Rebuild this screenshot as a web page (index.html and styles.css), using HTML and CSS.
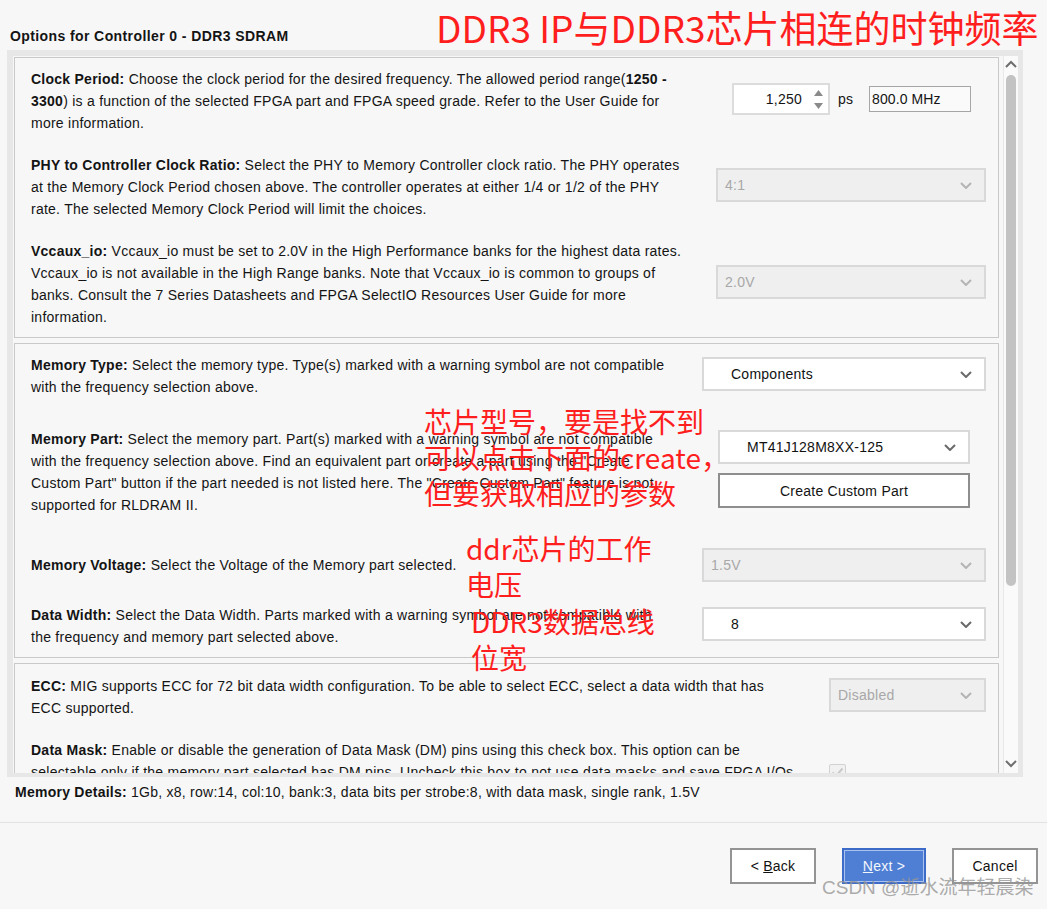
FILE: index.html
```html
<!DOCTYPE html>
<html>
<head>
<meta charset="utf-8">
<link rel="stylesheet" href="styles.css">
</head>
<body>
<div class="page">
  <div class="title">Options for Controller 0 - DDR3 SDRAM</div>
  <div class="pane">
    <div class="viewport">
      <div class="panels">
        <div class="panel p1">
          <div class="row">
            <div class="text"><b>Clock Period:</b> Choose the clock period for the desired frequency. The allowed period range(<b>1250 -</b><br><b>3300</b>) is a function of the selected FPGA part and FPGA speed grade. Refer to the User Guide for<br>more information.</div>
            <div class="ctrl clock">
              <div class="spin">
                <span class="spin-val">1,250</span>
                <span class="spin-arrows">
                  <svg width="9" height="6" viewBox="0 0 9 6"><path d="M0 6L4.5 0L9 6Z" fill="#8a8a8a"/></svg>
                  <svg width="9" height="6" viewBox="0 0 9 6"><path d="M0 0L4.5 6L9 0Z" fill="#8a8a8a"/></svg>
                </span>
              </div>
              <span class="unit">ps</span>
              <div class="freq">800.0 MHz</div>
            </div>
          </div>
          <div class="row gap20">
            <div class="text"><b>PHY to Controller Clock Ratio:</b> Select the PHY to Memory Controller clock ratio. The PHY operates<br>at the Memory Clock Period chosen above. The controller operates at either 1/4 or 1/2 of the PHY<br>rate. The selected Memory Clock Period will limit the choices.</div>
            <div class="ctrl dd dd-off w270"><span>4:1</span><svg class="chev" width="12" height="7" viewBox="0 0 12 7"><path d="M1 1l5 5 5-5" fill="none" stroke="currentColor" stroke-width="2"/></svg></div>
          </div>
          <div class="row gap20">
            <div class="text"><b>Vccaux_io:</b> Vccaux_io must be set to 2.0V in the High Performance banks for the highest data rates.<br>Vccaux_io is not available in the High Range banks. Note that Vccaux_io is common to groups of<br>banks. Consult the 7 Series Datasheets and FPGA SelectIO Resources User Guide for more<br>information.</div>
            <div class="ctrl dd dd-off w270"><span>2.0V</span><svg class="chev" width="12" height="7" viewBox="0 0 12 7"><path d="M1 1l5 5 5-5" fill="none" stroke="currentColor" stroke-width="2"/></svg></div>
          </div>
        </div>

        <div class="panel p2">
          <div class="row">
            <div class="text"><b>Memory Type:</b> Select the memory type. Type(s) marked with a warning symbol are not compatible<br>with the frequency selection above.</div>
            <div class="ctrl dd dd-on w284"><span>Components</span><svg class="chev" width="12" height="7" viewBox="0 0 12 7"><path d="M1 1l5 5 5-5" fill="none" stroke="currentColor" stroke-width="2"/></svg></div>
          </div>
          <div class="row gap30">
            <div class="text"><b>Memory Part:</b> Select the memory part. Part(s) marked with a warning symbol are not compatible<br>with the frequency selection above. Find an equivalent part or create a part using the "Create<br>Custom Part" button if the part needed is not listed here. The "Create Custom Part" feature is not<br>supported for RLDRAM II.</div>
            <div class="ctrl part">
              <div class="dd dd-on"><span>MT41J128M8XX-125</span><svg class="chev" width="12" height="7" viewBox="0 0 12 7"><path d="M1 1l5 5 5-5" fill="none" stroke="currentColor" stroke-width="2"/></svg></div>
              <div class="btn-custom">Create Custom Part</div>
            </div>
          </div>
          <div class="row gap32">
            <div class="text"><b>Memory Voltage:</b> Select the Voltage of the Memory part selected.</div>
            <div class="ctrl flat dd dd-off w284"><span>1.5V</span><svg class="chev" width="12" height="7" viewBox="0 0 12 7"><path d="M1 1l5 5 5-5" fill="none" stroke="currentColor" stroke-width="2"/></svg></div>
          </div>
          <div class="row gap22">
            <div class="text"><b>Data Width:</b> Select the Data Width. Parts marked with a warning symbol are not compatible with<br>the frequency and memory part selected above.</div>
            <div class="ctrl dd dd-on w284"><span>8</span><svg class="chev" width="12" height="7" viewBox="0 0 12 7"><path d="M1 1l5 5 5-5" fill="none" stroke="currentColor" stroke-width="2"/></svg></div>
          </div>
        </div>

        <div class="panel p3">
          <div class="row">
            <div class="text"><b>ECC:</b> MIG supports ECC for 72 bit data width configuration. To be able to select ECC, select a data width that has<br>ECC supported.</div>
            <div class="ctrl dd dd-off w157"><span>Disabled</span><svg class="chev" width="12" height="7" viewBox="0 0 12 7"><path d="M1 1l5 5 5-5" fill="none" stroke="currentColor" stroke-width="2"/></svg></div>
          </div>
          <div class="row gap20">
            <div class="text text-tall"><b>Data Mask:</b> Enable or disable the generation of Data Mask (DM) pins using this check box. This option can be<br>selectable only if the memory part selected has DM pins. Uncheck this box to not use data masks and save FPGA I/Os.</div>
            <div class="ctrl flat w157">
              <div class="check"><svg width="13" height="11" viewBox="0 0 13 11"><path d="M1.5 5.5l3.5 3.5 6.5-7.5" fill="none" stroke="#c9c9c9" stroke-width="2"/></svg></div>
            </div>
          </div>
        </div>
      </div>
      <div class="sb">
        <svg class="sb-up" width="12" height="8" viewBox="0 0 12 8"><path d="M1 7L6 2L11 7" fill="none" stroke="#6e6e6e" stroke-width="2"/></svg>
        <div class="thumb"></div>
        <div class="sb-fill"></div>
        <svg class="sb-down" width="12" height="8" viewBox="0 0 12 8"><path d="M1 1L6 6L11 1" fill="none" stroke="#6e6e6e" stroke-width="2"/></svg>
      </div>
    </div>
  </div>

  <div class="details"><b>Memory Details:</b> 1Gb, x8, row:14, col:10, bank:3, data bits per strobe:8, with data mask, single rank, 1.5V</div>
  <div class="sep"></div>
  <div class="buttons">
    <div class="btn"><span>&lt; <u>B</u>ack</span></div>
    <div class="btn btn-primary"><span><u>N</u>ext &gt;</span></div>
    <div class="btn"><span>Cancel</span></div>
  </div>

  <div class="note note-top">DDR3 IP与DDR3芯片相连的时钟频率</div>
  <div class="note note-part">芯片型号，要是找不到<br>可以点击下面的create，<br>但要获取相应的参数</div>
  <div class="note note-volt">ddr芯片的工作<br>电压</div>
  <div class="note note-width">DDR3数据总线<br>位宽</div>
  <div class="watermark">CSDN @逝水流年轻晨染</div>
</div>
</body>
</html>
```

FILE: styles.css
```css
* { box-sizing: border-box; }

body {
  margin: 0;
  background: #f7f7f7;
  font-family: "Liberation Sans", Arial, sans-serif;
  font-size: 14px;
  letter-spacing: 0.25px;
  color: #141414;
}

.page {
  position: relative;
  width: 1047px;
  height: 909px;
  overflow: hidden;
}

.title {
  height: 50px;
  padding: 26px 0 0 10px;
  line-height: 20px;
  font-weight: bold;
  letter-spacing: 0.4px;
}

.pane {
  margin-left: 7px;
  width: 1016px;
  height: 727px;
  background: #e7e7e7;
  padding: 6px 5px 4px 6px;
}

.viewport {
  display: flex;
  height: 717px;
  background: #f7f7f7;
  overflow: hidden;
}

.panels {
  flex: 1 1 auto;
  padding: 1px 4px 0 1px;
  display: flex;
  flex-direction: column;
  gap: 5px;
  overflow: hidden;
}

.panel {
  flex: none;
  border: 1px solid #c9c9c9;
  background: #f7f7f7;
  padding: 10px 12px 9px 16px;
}

.p3 { padding-top: 11px; }

.row {
  display: flex;
  align-items: center;
  justify-content: space-between;
}

.gap20 { margin-top: 20px; }
.gap22 { margin-top: 22px; }
.gap30 { margin-top: 30px; }
.gap32 { margin-top: 32px; }

.text {
  flex: 1 1 auto;
  white-space: nowrap;
  line-height: 22px;
}

.text-tall { padding-bottom: 22px; }

.ctrl {
  flex: none;
  margin-bottom: 4px;
}

.ctrl.flat { margin-bottom: 0; }

.w157 { width: 157px; }
.w270 { width: 270px; }
.w284 { width: 284px; }

/* clock controls */
.clock {
  display: flex;
  align-items: center;
  margin-right: 15px;
}

.spin {
  width: 98px;
  height: 32px;
  background: #fff;
  border: 2px solid #dcdcdc;
  display: flex;
  align-items: center;
  justify-content: flex-end;
  padding-right: 5px;
}

.spin-val { margin-right: 12px; }

.spin-arrows {
  display: flex;
  flex-direction: column;
  gap: 7px;
}

.spin-arrows svg { display: block; }

.unit { margin-left: 8px; width: 31px; }

.freq {
  width: 102px;
  height: 26px;
  border: 1px solid #a6a6a6;
  background: #fafafa;
  line-height: 24px;
  padding-left: 2px;
  letter-spacing: 0.1px;
}

/* dropdowns */
.dd {
  height: 34px;
  border: 2px solid #d9d9d9;
  display: flex;
  align-items: center;
  justify-content: space-between;
  padding: 0 12px 0 27px;
}

.dd-on { background: #fff; color: #111; }
.dd-on .chev { color: #6a6a6a; }

.dd-off {
  background: #efefef;
  color: #a8a8a8;
  padding-left: 7px;
}
.dd-off .chev { color: #b4b4b4; }

.chev { display: block; }

.part {
  width: 252px;
  margin-right: 16px;
  margin-bottom: 6px;
  display: flex;
  flex-direction: column;
  gap: 9px;
}

.btn-custom {
  height: 35px;
  background: #fff;
  border: 2px solid #8e8e8e;
  display: flex;
  align-items: center;
  justify-content: center;
}

.check {
  width: 17px;
  height: 17px;
  border: 1px solid #d2d2d2;
  border-radius: 2px;
  background: #f1f1f1;
  display: flex;
  align-items: center;
  justify-content: center;
}

/* scrollbar */
.sb {
  flex: none;
  width: 15px;
  border-left: 1px solid #e8e8e8;
  background: #fafafa;
  display: flex;
  flex-direction: column;
  align-items: center;
}

.sb-up { margin-top: 4px; display: block; }

.thumb {
  margin-top: 7px;
  width: 10px;
  height: 511px;
  border-radius: 5px;
  background: #c3c3c3;
}

.sb-fill { flex: 1 1 auto; }

.sb-down { margin-bottom: 5px; display: block; }

/* bottom */
.details {
  margin-top: 4px;
  padding-left: 15px;
  line-height: 22px;
}

.sep {
  margin-top: 19px;
  height: 1px;
  background: #e2e2e2;
}

.buttons {
  margin-top: 25px;
  display: flex;
  justify-content: flex-end;
  gap: 26px;
  padding-right: 9px;
}

.btn {
  width: 86px;
  height: 36px;
  background: #fff;
  border: 2px solid #949494;
  display: flex;
  align-items: center;
  justify-content: center;
  color: #111;
}

.btn-primary {
  width: 84px;
  background: #4f7fd4;
  border-color: #3c6cc8;
  box-shadow: inset 0 0 0 1px #a9c2ef;
  color: #f3f6fc;
}

/* annotations */
.note {
  position: absolute;
  font-family: "Noto Sans CJK SC", "Liberation Sans", sans-serif;
  color: #ff1e1e;
  white-space: nowrap;
  letter-spacing: 0;
}

.note-top {
  left: 436px;
  top: 7px;
  font-size: 37px;
  line-height: 40px;
}

.note-part {
  left: 424px;
  top: 403px;
  font-size: 28px;
  line-height: 36px;
}

.note-volt {
  left: 466px;
  top: 530px;
  font-size: 28px;
  line-height: 36px;
}

.note-width {
  left: 471px;
  top: 603px;
  font-size: 28px;
  line-height: 36px;
}

.watermark {
  position: absolute;
  left: 822px;
  top: 877px;
  font-family: "Liberation Sans", "Noto Sans CJK SC", sans-serif;
  font-size: 19px;
  line-height: 22px;
  letter-spacing: 0;
  color: rgba(150, 150, 150, 0.8);
  white-space: nowrap;
}
```
